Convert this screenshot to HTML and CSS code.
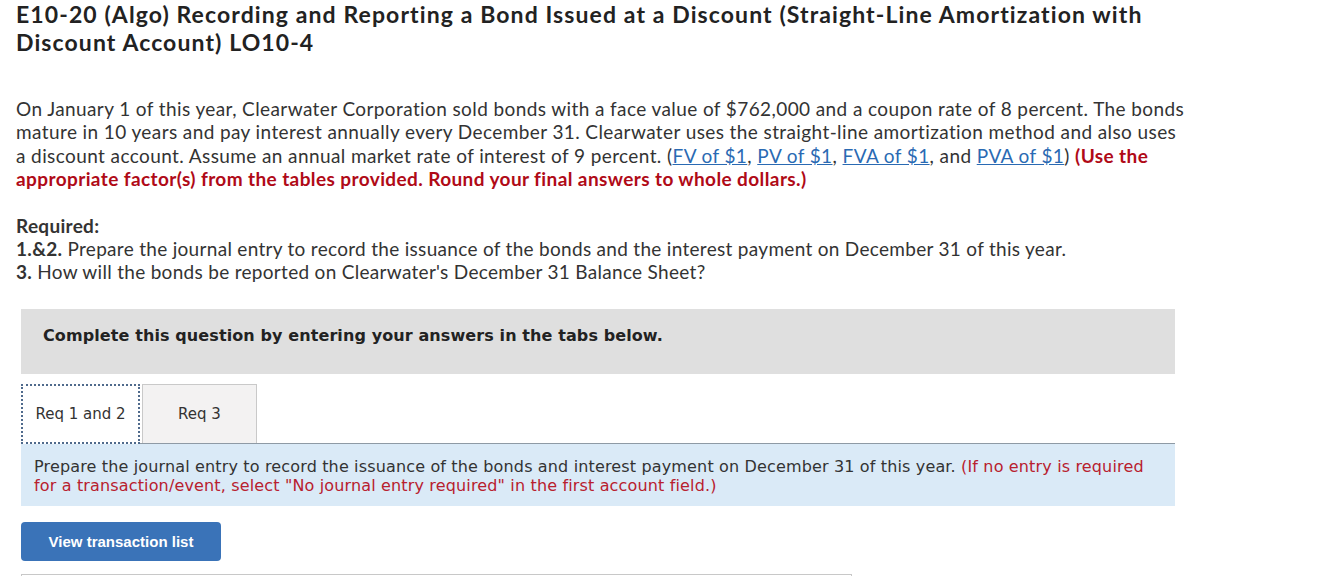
FILE: index.html
```html
<!DOCTYPE html>
<html lang="en">
<head>
<meta charset="utf-8">
<title>E10-20 (Algo)</title>
<link rel="stylesheet" href="styles.css">
</head>
<body>
<div class="page">
  <h1 class="title">E10-20 (Algo) Recording and Reporting a Bond Issued at a Discount (Straight-Line Amortization with Discount Account) LO10-4</h1>
  <p class="intro">On January 1 of this year, Clearwater Corporation sold bonds with a face value of $762,000 and a coupon rate of 8 percent. The bonds mature in 10 years and pay interest annually every December 31. Clearwater uses the straight-line amortization method and also uses a discount account. Assume an annual market rate of interest of 9 percent. (<a href="#" class="lnk">FV of $1</a>, <a href="#" class="lnk">PV of $1</a>, <a href="#" class="lnk">FVA of $1</a>, and <a href="#" class="lnk">PVA of $1</a>) <strong class="warn">(Use the appropriate factor(s) from the tables provided. Round your final answers to whole dollars.)</strong></p>
  <div class="required">
    <div class="req-head">Required:</div>
    <div><b>1.&amp;2.</b> Prepare the journal entry to record the issuance of the bonds and the interest payment on December 31 of this year.</div>
    <div><b>3.</b> How will the bonds be reported on Clearwater's December 31 Balance Sheet?</div>
  </div>
  <div class="work">
    <div class="banner">Complete this question by entering your answers in the tabs below.</div>
    <div class="tabs">
      <div class="tab active">Req 1 and 2</div>
      <div class="tab">Req 3</div>
    </div>
    <div class="panel">Prepare the journal entry to record the issuance of the bonds and interest payment on December 31 of this year. <span class="note">(If no entry is required for a transaction/event, select "No journal entry required" in the first account field.)</span></div>
    <button class="btn" type="button">View transaction list</button>
    <div class="table-top"></div>
  </div>
</div>
</body>
</html>
```
FILE: styles.css
```css
html, body {
  margin: 0;
  padding: 0;
  background: #fff;
}
body {
  font-family: Lato, "Open Sans", sans-serif;
  color: #333;
  width: 1318px;
  height: 576px;
  overflow: hidden;
}
.page {
  padding-left: 16px;
}
.title {
  margin: 0;
  font-size: 23px;
  line-height: 28px;
  font-weight: 700;
  letter-spacing: 1.1px;
  color: #222;
  width: 1170px;
}
.intro {
  margin: 41px 0 0;
  font-size: 19px;
  line-height: 23.4px;
  letter-spacing: 0.4px;
  color: #333;
  width: 1171px;
}
.lnk {
  color: #2a6ab3;
  text-decoration: underline;
}
.warn {
  color: #b00a17;
  font-weight: 700;
}
.required {
  margin-top: 23px;
  font-size: 19px;
  line-height: 23.4px;
  letter-spacing: 0.3px;
}
.req-head {
  font-weight: 700;
}
.required b {
  font-weight: 700;
}
.work {
  margin-top: 25px;
  padding-left: 5px;
  width: 1154px;
  font-family: "DejaVu Sans", Verdana, sans-serif;
}
.banner {
  background: #dfdfdf;
  height: 65px;
  box-sizing: border-box;
  padding: 16px 22px 0;
  font-size: 16px;
  line-height: 22px;
  font-weight: 700;
  letter-spacing: 0.1px;
  color: #222;
}
.tabs {
  display: flex;
  gap: 2px;
  margin-top: 10px;
  height: 59px;
  position: relative;
  z-index: 1;
}
.tab {
  display: flex;
  align-items: center;
  justify-content: center;
  box-sizing: border-box;
  width: 115px;
  height: 59px;
  border: 1px solid #c9c9c9;
  border-bottom: none;
  background: #f3f2f2;
  font-size: 15px;
  color: #333;
}
.tab.active {
  width: 119px;
  height: 60px;
  background: #fff;
  border: 2px dotted #4f6a8c;
}
.panel {
  background: #daeaf7;
  border-top: 1px solid #8e9aa5;
  padding: 13px 13px 11px;
  font-size: 16px;
  line-height: 19px;
  letter-spacing: 0.15px;
  color: #333;
}
.note {
  color: #b8202e;
}
.btn {
  display: block;
  margin-top: 16px;
  width: 200px;
  height: 39px;
  border: none;
  border-radius: 4px;
  background: #3a73b8;
  color: #fff;
  font-family: "Liberation Sans", Arial, sans-serif;
  font-weight: 700;
  font-size: 15px;
  letter-spacing: 0;
  padding: 0;
}
.table-top {
  margin-top: 13px;
  width: 829px;
  height: 10px;
  border-top: 1px solid #c8c8c8;
  border-left: 1px solid #c8c8c8;
  border-right: 1px solid #c8c8c8;
}
```
